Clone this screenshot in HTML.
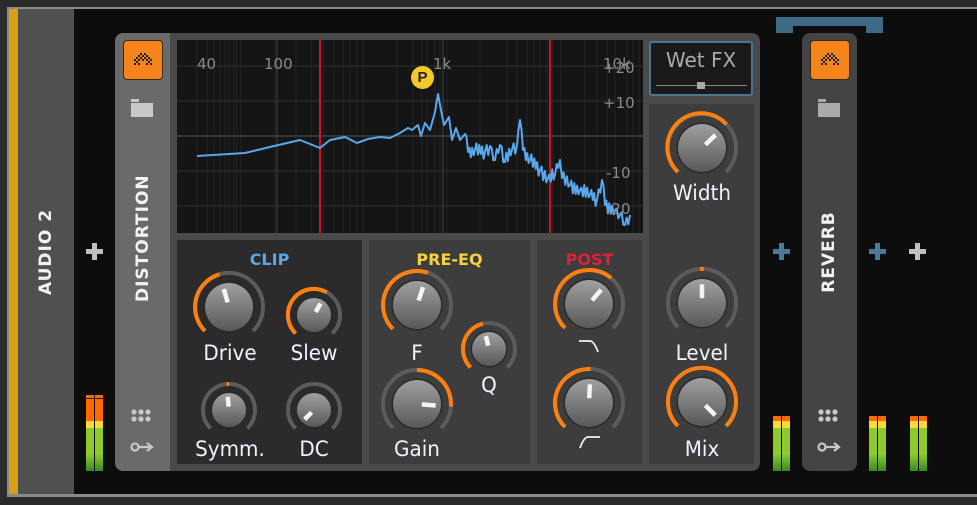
<!DOCTYPE html>
<html><head><meta charset="utf-8"><style>
*{margin:0;padding:0;box-sizing:border-box}
body{width:977px;height:505px;background:#2b2b2b;position:relative;overflow:hidden;font-family:"Liberation Sans","DejaVu Sans",sans-serif}
.a{position:absolute}
.lbl{position:absolute;color:#f0f2ff;font-size:21px;text-align:center;width:100px;line-height:22px;font-family:"DejaVu Sans","Liberation Sans",sans-serif;transform:scaleX(0.95)}
.hd{position:absolute;font-size:16px;font-weight:bold;text-align:center;line-height:18px;font-family:"DejaVu Sans","Liberation Sans",sans-serif}
.vt{position:absolute;color:#f2f2f2;font-weight:bold;font-size:17px;transform:rotate(-90deg);white-space:nowrap;letter-spacing:1px;font-family:"DejaVu Sans","Liberation Sans",sans-serif}
.gl{position:absolute;color:#8a8a8a;font-size:15px;font-family:"DejaVu Sans",sans-serif}
</style></head><body>
<div class="a" style="left:7px;top:7px;width:970px;height:490px;background:#8a8a8a"></div>
<div class="a" style="left:9px;top:9px;width:968px;height:485px;background:#0d0d0d"></div>
<div class="a" style="left:9px;top:9px;width:9px;height:485px;background:#d9a013"></div>
<div class="a" style="left:18px;top:9px;width:56px;height:485px;background:#505050"></div>
<div class="vt" style="left:0px;top:242px;width:92px;text-align:center">AUDIO 2</div>

<svg width="0" height="0" style="position:absolute"><defs><g id="ic"><rect x="10" y="1" width="2" height="2"/><rect x="14" y="1" width="2" height="2"/><rect x="8" y="3" width="2" height="2"/><rect x="12" y="3" width="2" height="2"/><rect x="16" y="3" width="2" height="2"/><rect x="6" y="5" width="2" height="2"/><rect x="10" y="5" width="2" height="2"/><rect x="14" y="5" width="2" height="2"/><rect x="18" y="5" width="2" height="2"/><rect x="4" y="7" width="2" height="2"/><rect x="8" y="7" width="2" height="2"/><rect x="12" y="7" width="2" height="2"/><rect x="16" y="7" width="2" height="2"/><rect x="20" y="7" width="2" height="2"/><rect x="6" y="9" width="2" height="2"/><rect x="18" y="9" width="2" height="2"/><rect x="4" y="11" width="2" height="2"/><rect x="20" y="11" width="2" height="2"/><rect x="8" y="11" width="2" height="2"/><rect x="16" y="11" width="2" height="2"/></g></defs></svg>

<!-- distortion device -->
<div class="a" style="left:115px;top:33px;width:645px;height:438px;background:#4a4a4a;border-radius:8px"></div>
<div class="a" style="left:115px;top:33px;width:55px;height:438px;background:#6a6a6a;border-radius:8px 0 0 8px"></div>
<div class="a" style="left:123px;top:40px;width:40px;height:40px;background:#f5851a;border:1px solid #3a2a10;border-radius:4px"></div>
<svg class="a" style="left:130px;top:52px" width="26" height="14" fill="#222"><use href="#ic"/></svg>
<svg class="a" style="left:131px;top:99px" width="22" height="18"><rect x="0" y="0" width="8" height="3" fill="#c8c8c8"/><rect x="0" y="4" width="22" height="14" fill="#c8c8c8"/><rect x="0" y="3" width="22" height="1" fill="#6a6a6a"/></svg>
<div class="vt" style="left:93px;top:242px;width:100px;text-align:center">DISTORTION</div>
<svg class="a" style="left:131px;top:409px" width="24" height="14" fill="#c8c8c8"><circle cx="3" cy="3" r="2.6"/><circle cx="10" cy="3" r="2.6"/><circle cx="17" cy="3" r="2.6"/><circle cx="3" cy="10" r="2.6"/><circle cx="10" cy="10" r="2.6"/><circle cx="17" cy="10" r="2.6"/></svg>
<svg class="a" style="left:130px;top:440px" width="26" height="14" fill="none" stroke="#c8c8c8" stroke-width="2.2"><circle cx="5" cy="7" r="3.5"/><path d="M9 7H22M17 3L22 7L17 11"/></svg>

<!-- graph -->
<svg class="a" style="left:177px;top:40px" width="466" height="193" id="gr">
<rect width="466" height="193" fill="#151515"/>
<g id="grid"></g>
<line x1="143" y1="0" x2="143" y2="193" stroke="#d01030" stroke-width="2"/>
<line x1="373" y1="0" x2="373" y2="193" stroke="#d01030" stroke-width="2"/>
<path id="sp" fill="none" stroke="#5aa8ec" stroke-width="2" stroke-linejoin="round"/>
</svg>
<div class="gl" style="left:197px;top:55px">40</div>
<div class="gl" style="left:264px;top:55px">100</div>
<div class="gl" style="left:433px;top:55px">1k</div>
<div class="gl" style="left:603px;top:55px">10k</div>
<div class="gl" style="left:603px;top:59px">+20</div>
<div class="gl" style="left:603px;top:94px">+10</div>
<div class="gl" style="left:606px;top:164px">-10</div>
<div class="gl" style="left:606px;top:200px">-20</div>
<div class="a" style="left:411px;top:66px;width:23px;height:23px;border-radius:50%;background:#f5c92a;color:#222;font-weight:bold;font-size:15px;text-align:center;line-height:23px">P</div>

<!-- sections -->
<div class="a" style="left:177px;top:240px;width:185px;height:224px;background:#2b2b2b"></div>
<div class="a" style="left:369px;top:240px;width:161px;height:224px;background:#3d3d3d"></div>
<div class="a" style="left:537px;top:240px;width:105px;height:224px;background:#3d3d3d"></div>
<div class="a" style="left:649px;top:41px;width:104px;height:55px;background:#1a1a1a;border:2px solid #4a7595;border-radius:3px"></div>
<div class="a" style="left:649px;top:48px;width:104px;text-align:center;color:#aaa;font-size:20px;font-family:'DejaVu Sans',sans-serif">Wet FX</div>
<div class="a" style="left:656px;top:85px;width:91px;height:1px;background:#888"></div>
<div class="a" style="left:697px;top:82px;width:8px;height:7px;background:#aaa"></div>
<div class="a" style="left:649px;top:104px;width:105px;height:360px;background:#3d3d3d"></div>

<div class="hd" style="left:177px;top:251px;width:185px;color:#5aa7e8">CLIP</div>
<div class="hd" style="left:369px;top:251px;width:161px;color:#f5d33d">PRE-EQ</div>
<div class="hd" style="left:537px;top:251px;width:105px;color:#e0203a">POST</div>

<svg class="a" style="left:0;top:0" width="977" height="505" id="kn"></svg>

<div class="lbl" style="left:180px;top:342px">Drive</div>
<div class="lbl" style="left:264px;top:342px">Slew</div>
<div class="lbl" style="left:180px;top:438px">Symm.</div>
<div class="lbl" style="left:264px;top:438px">DC</div>
<div class="lbl" style="left:367px;top:342px">F</div>
<div class="lbl" style="left:439px;top:374px">Q</div>
<div class="lbl" style="left:367px;top:438px">Gain</div>
<div class="lbl" style="left:652px;top:182px">Width</div>
<div class="lbl" style="left:652px;top:342px">Level</div>
<div class="lbl" style="left:652px;top:438px">Mix</div>
<svg class="a" style="left:578px;top:338px" width="24" height="16" fill="none" stroke="#f0f0f0" stroke-width="1.8"><path d="M1 3H12Q16 3 20 14"/></svg>
<svg class="a" style="left:578px;top:434px" width="24" height="16" fill="none" stroke="#f0f0f0" stroke-width="1.8"><path d="M2 14Q6 3 10 3H22"/></svg>

<!-- plus icons -->
<svg class="a" style="left:86px;top:243px" width="17" height="17" fill="#c0c0c0"><rect x="6" y="0" width="5" height="17"/><rect x="0" y="6" width="17" height="5"/></svg>
<svg class="a" style="left:773px;top:243px" width="17" height="17" fill="#4a7a98"><rect x="6" y="0" width="5" height="17"/><rect x="0" y="6" width="17" height="5"/></svg>
<svg class="a" style="left:869px;top:243px" width="17" height="17" fill="#4a7a98"><rect x="6" y="0" width="5" height="17"/><rect x="0" y="6" width="17" height="5"/></svg>
<svg class="a" style="left:909px;top:243px" width="17" height="17" fill="#c0c0c0"><rect x="6" y="0" width="5" height="17"/><rect x="0" y="6" width="17" height="5"/></svg>

<!-- bracket -->
<svg class="a" style="left:776px;top:17px" width="107" height="16" fill="#3f6a85"><path d="M0 0H107V16H90V9H17V16H0Z"/></svg>

<!-- reverb -->
<div class="a" style="left:802px;top:33px;width:55px;height:438px;background:#444;border-radius:8px"></div>
<div class="a" style="left:810px;top:40px;width:40px;height:40px;background:#f5851a;border:1px solid #3a2a10;border-radius:4px"></div>
<svg class="a" style="left:817px;top:52px" width="26" height="14" fill="#222"><use href="#ic"/></svg>
<svg class="a" style="left:818px;top:99px" width="22" height="18"><rect x="0" y="0" width="8" height="3" fill="#aaa"/><rect x="0" y="4" width="22" height="14" fill="#aaa"/><rect x="0" y="3" width="22" height="1" fill="#444"/></svg>
<div class="vt" style="left:779px;top:242px;width:100px;text-align:center">REVERB</div>
<svg class="a" style="left:818px;top:409px" width="24" height="14" fill="#c8c8c8"><circle cx="3" cy="3" r="2.6"/><circle cx="10" cy="3" r="2.6"/><circle cx="17" cy="3" r="2.6"/><circle cx="3" cy="10" r="2.6"/><circle cx="10" cy="10" r="2.6"/><circle cx="17" cy="10" r="2.6"/></svg>
<svg class="a" style="left:817px;top:440px" width="26" height="14" fill="none" stroke="#c8c8c8" stroke-width="2.2"><circle cx="5" cy="7" r="3.5"/><path d="M9 7H22M17 3L22 7L17 11"/></svg>

<div id="meters"></div>

<script>
var g=document.getElementById('grid'),s='';
var vx=[20,30,37,43,48,52,57,60,64,98,119,134,147,157,166,173,180,186,220,236,245,250,258,263,270,303,330,340,350,357,363,370,376,384,408,420,430,438,450,456,462];
vx.forEach(function(x){s+='<line x1="'+x+'" y1="0" x2="'+x+'" y2="193" stroke="#232323"/>';});
[100,266].forEach(function(x){s+='<line x1="'+x+'" y1="0" x2="'+x+'" y2="193" stroke="#444"/>';});
[26,61,131,166].forEach(function(y){s+='<line x1="0" y1="'+y+'" x2="466" y2="'+y+'" stroke="#303030"/>';});
s+='<line x1="0" y1="96" x2="466" y2="96" stroke="#555"/>';
g.innerHTML=s;
var P=[[197,156],[245,153],[270,147],[300,140],[315,146],[320,148],[330,140],[345,137],[357,143],[368,139],[380,137],[390,138],[400,133],[408,128],[412,130],[418,125],[421,136],[425,123],[430,130],[435,112],[438,94],[441,110],[444,125],[449,117],[452,140],[456,128],[460,140],[465,134],[468,152],[475,150],[485,152],[490,146],[495,160],[500,145],[505,162],[512,150],[517,145],[520,120],[523,150],[530,160],[540,170],[548,178],[555,175],[560,160],[562,178],[570,185],[580,190],[590,195],[597,200],[602,180],[605,205],[615,210],[620,215],[625,225],[630,215]];
var pts=[];
for(var i=0;i<P.length-1;i++){var a=P[i],b=P[i+1];var n=a[0]>460?Math.max(1,Math.round((b[0]-a[0])/1.5)):1;for(var k=0;k<n;k++){var t=k/n;var x=a[0]+(b[0]-a[0])*t,y=a[1]+(b[1]-a[1])*t;if(n>1&&k>0)y+=(k%2?-1:1)*(3+((k*7+i*3)%5));pts.push([x,y]);}}
pts.push(P[P.length-1]);
document.getElementById('sp').setAttribute('d','M'+pts.map(function(p){return (p[0]-177).toFixed(1)+' '+(p[1]-40).toFixed(1)}).join('L'));
var kn=document.getElementById('kn'),h='<defs><linearGradient id="kg" x1="0" y1="0" x2="0" y2="1"><stop offset="0" stop-color="#a0a0a0"/><stop offset="1" stop-color="#585858"/></linearGradient></defs>';
function pt(cx,cy,r,a){a=a*Math.PI/180;return [cx+r*Math.sin(a),cy-r*Math.cos(a)];}
function arc(cx,cy,r,a0,a1,col,w){if(a1-a0<0.5)return '';var p0=pt(cx,cy,r,a0),p1=pt(cx,cy,r,a1);return '<path d="M'+p0[0].toFixed(1)+' '+p0[1].toFixed(1)+'A'+r+' '+r+' 0 '+((a1-a0)>180?1:0)+' 1 '+p1[0].toFixed(1)+' '+p1[1].toFixed(1)+'" fill="none" stroke="'+col+'" stroke-width="'+w+'"/>';}
function knob(cx,cy,R,r,v,bip){var ang=-135+270*v;
h+=arc(cx,cy,R,-135,135,'#5c5c5c',4);
if(bip){var a0=Math.min(0,ang),a1=Math.max(0,ang);if(a1-a0<3){a0=-3;a1=3;}h+=arc(cx,cy,R,a0,a1,'#ff7f10',4);}
else h+=arc(cx,cy,R,-135,ang,'#ff7f10',4);
h+='<circle cx="'+cx+'" cy="'+cy+'" r="'+(r+1.5)+'" fill="#2a2a2a"/><circle cx="'+cx+'" cy="'+cy+'" r="'+r+'" fill="url(#kg)"/>';
var q0=pt(cx,cy,r*0.2,ang),q1=pt(cx,cy,r*0.78,ang);
h+='<line x1="'+q0[0]+'" y1="'+q0[1]+'" x2="'+q1[0]+'" y2="'+q1[1]+'" stroke="#f4f4f4" stroke-width="4.5"/>';}
knob(229,307,34,24,0.44);
knob(314,315,26,17,0.61);
knob(229,410,26,17,0.48,1);
knob(314,410,26,17,0);
knob(417,305,34,24,0.57);
knob(489,349,26,17,0.45);
knob(417,404,34,24,0.85,1);
knob(589,304,34,24,0.65);
knob(589,403,34,24,0.51);
knob(702,148,34,24,0.67);
knob(702,303,34,24,0.5,1);
knob(702,402,34,24,1);
kn.innerHTML=h;
var m='';
function meter(x,top){[0,9].forEach(function(dx){var X=x+dx;
m+='<div class="a" style="left:'+X+'px;top:'+top+'px;width:8px;height:'+(421-top)+'px;background:#ff6a00"></div>';
m+='<div class="a" style="left:'+X+'px;top:421px;width:8px;height:7px;background:#ffd83a"></div>';
m+='<div class="a" style="left:'+X+'px;top:428px;width:8px;height:43px;background:linear-gradient(#8ecb2a 60%,#3a8a25)"></div>';});}
meter(86,395);meter(773,416);meter(869,416);meter(910,416);
m+='<div class="a" style="left:86px;top:398px;width:17px;height:1px;background:#222"></div>';
document.getElementById('meters').innerHTML=m;
</script>
</body></html>
